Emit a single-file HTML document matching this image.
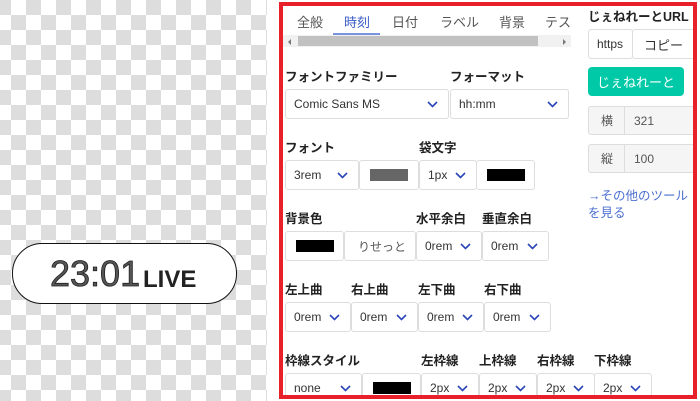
<!DOCTYPE html>
<html><head><meta charset="utf-8"><style>
*{box-sizing:border-box;margin:0;padding:0}
body{width:700px;height:401px;overflow:hidden;background:#fff;font-family:"Liberation Sans","Noto Sans CJK JP",sans-serif;position:relative;color:#222}
.chk{position:absolute;left:0;top:0;width:267px;height:401px;background-color:#fff;background-image:linear-gradient(45deg,#ddd 25%,transparent 25%,transparent 75%,#ddd 75%),linear-gradient(45deg,#ddd 25%,transparent 25%,transparent 75%,#ddd 75%);background-size:30px 30px;background-position:11px 0,26px 15px}
.pill{position:absolute;left:12px;top:243px;width:225px;height:61px;border:1.5px solid #111;border-radius:30px;background:#fff}
.t{position:absolute;left:50px;top:254px;font-size:36px;line-height:40px;color:#555;-webkit-text-stroke:0.8px #222;font-family:"Liberation Sans",sans-serif}
.l{position:absolute;left:143px;top:266px;font-size:24px;line-height:28px;font-weight:bold;color:#222;font-family:"Liberation Sans",sans-serif}
.frame{position:absolute;left:279px;top:2px;width:418px;height:397px;border:4px solid #e8202a;overflow:hidden}
.a{position:absolute;white-space:nowrap}
.tab{font-size:13px;color:#555;top:8px}
.lab{font-size:12.5px;font-weight:bold;color:#222}
.box{position:absolute;border:1px solid #ddd;border-radius:3px;background:#fff;font-size:12px;color:#333;padding-left:8px;display:flex;align-items:center}
.box svg{position:absolute;right:10px;top:50%;margin-top:-3px}
.sw{position:absolute;height:12px;top:50%;margin-top:-6px;background:#000}
</style></head><body>
<div class="chk"></div>
<div class="pill"></div>
<div class="t">23:01</div>
<div class="l">LIVE</div>
<div class="frame">
<div style="position:absolute;left:-283px;top:-6px;width:700px;height:401px">
<span class="a tab" style="left:297px;top:12px">全般</span>
<span class="a tab" style="left:344px;top:12px;color:#3a5bc7">時刻</span>
<div class="a" style="left:333px;top:33px;width:47px;height:1.5px;background:#7a93e0"></div>
<span class="a tab" style="left:392px;top:12px">日付</span>
<span class="a tab" style="left:440px;top:12px">ラベル</span>
<span class="a tab" style="left:499px;top:12px">背景</span>
<span class="a tab" style="left:545px;top:12px">テス</span>
<div class="a" style="left:283px;top:35px;width:288px;height:12px;background:#f1f1f1"></div>
<div class="a" style="left:298px;top:36px;width:240px;height:10px;background:#c1c1c1"></div>
<div class="a" style="left:288px;top:39px;width:0;height:0;border:3px solid transparent;border-right-color:#777;border-left:0"></div>
<div class="a" style="left:563px;top:39px;width:0;height:0;border:3px solid transparent;border-left-color:#777;border-right:0"></div>

<span class="a lab" style="left:285px;top:66px">フォントファミリー</span>
<span class="a lab" style="left:450px;top:66px">フォーマット</span>
<div class="box" style="left:285px;top:89px;width:164px;height:30px">Comic Sans MS<svg width="11" height="7"><path d="M1 1l4.5 4.5L10 1" stroke="#2a45b8" stroke-width="1.6" fill="none"/></svg></div>
<div class="box" style="left:450px;top:89px;width:119px;height:30px">hh:mm<svg width="11" height="7"><path d="M1 1l4.5 4.5L10 1" stroke="#2a45b8" stroke-width="1.6" fill="none"/></svg></div>

<span class="a lab" style="left:285px;top:137px">フォント</span>
<span class="a lab" style="left:419px;top:137px">袋文字</span>
<div class="box" style="left:285px;top:160px;width:74px;height:30px">3rem<svg width="11" height="7"><path d="M1 1l4.5 4.5L10 1" stroke="#2a45b8" stroke-width="1.6" fill="none"/></svg></div>
<div class="box" style="left:359px;top:160px;width:60px;height:30px"><div class="sw" style="left:10px;width:38px;background:#666"></div></div>
<div class="box" style="left:419px;top:160px;width:58px;height:30px">1px<svg width="11" height="7"><path d="M1 1l4.5 4.5L10 1" stroke="#2a45b8" stroke-width="1.6" fill="none"/></svg></div>
<div class="box" style="left:476px;top:160px;width:59px;height:30px"><div class="sw" style="left:10px;width:38px"></div></div>

<span class="a lab" style="left:285px;top:208px">背景色</span>
<span class="a lab" style="left:416px;top:208px">水平余白</span>
<span class="a lab" style="left:482px;top:208px">垂直余白</span>
<div class="box" style="left:285px;top:231px;width:59px;height:30px"><div class="sw" style="left:10px;width:38px"></div></div>
<div class="box" style="left:344px;top:231px;width:72px;height:30px;padding-left:13px;color:#555">りせっと</div>
<div class="box" style="left:416px;top:231px;width:66px;height:30px">0rem<svg width="11" height="7"><path d="M1 1l4.5 4.5L10 1" stroke="#2a45b8" stroke-width="1.6" fill="none"/></svg></div>
<div class="box" style="left:482px;top:231px;width:67px;height:30px">0rem<svg width="11" height="7"><path d="M1 1l4.5 4.5L10 1" stroke="#2a45b8" stroke-width="1.6" fill="none"/></svg></div>

<span class="a lab" style="left:285px;top:279px">左上曲</span>
<span class="a lab" style="left:351px;top:279px">右上曲</span>
<span class="a lab" style="left:418px;top:279px">左下曲</span>
<span class="a lab" style="left:484px;top:279px">右下曲</span>
<div class="box" style="left:285px;top:302px;width:66px;height:30px">0rem<svg width="11" height="7"><path d="M1 1l4.5 4.5L10 1" stroke="#2a45b8" stroke-width="1.6" fill="none"/></svg></div>
<div class="box" style="left:351px;top:302px;width:67px;height:30px">0rem<svg width="11" height="7"><path d="M1 1l4.5 4.5L10 1" stroke="#2a45b8" stroke-width="1.6" fill="none"/></svg></div>
<div class="box" style="left:418px;top:302px;width:66px;height:30px">0rem<svg width="11" height="7"><path d="M1 1l4.5 4.5L10 1" stroke="#2a45b8" stroke-width="1.6" fill="none"/></svg></div>
<div class="box" style="left:484px;top:302px;width:67px;height:30px">0rem<svg width="11" height="7"><path d="M1 1l4.5 4.5L10 1" stroke="#2a45b8" stroke-width="1.6" fill="none"/></svg></div>

<span class="a lab" style="left:285px;top:350px">枠線スタイル</span>
<span class="a lab" style="left:421px;top:350px">左枠線</span>
<span class="a lab" style="left:479px;top:350px">上枠線</span>
<span class="a lab" style="left:537px;top:350px">右枠線</span>
<span class="a lab" style="left:594px;top:350px">下枠線</span>
<div class="box" style="left:285px;top:373px;width:77px;height:30px">none<svg width="11" height="7"><path d="M1 1l4.5 4.5L10 1" stroke="#2a45b8" stroke-width="1.6" fill="none"/></svg></div>
<div class="box" style="left:362px;top:373px;width:59px;height:30px"><div class="sw" style="left:10px;width:38px"></div></div>
<div class="box" style="left:421px;top:373px;width:58px;height:30px">2px<svg width="11" height="7"><path d="M1 1l4.5 4.5L10 1" stroke="#2a45b8" stroke-width="1.6" fill="none"/></svg></div>
<div class="box" style="left:479px;top:373px;width:58px;height:30px">2px<svg width="11" height="7"><path d="M1 1l4.5 4.5L10 1" stroke="#2a45b8" stroke-width="1.6" fill="none"/></svg></div>
<div class="box" style="left:537px;top:373px;width:58px;height:30px">2px<svg width="11" height="7"><path d="M1 1l4.5 4.5L10 1" stroke="#2a45b8" stroke-width="1.6" fill="none"/></svg></div>
<div class="box" style="left:594px;top:373px;width:58px;height:30px">2px<svg width="11" height="7"><path d="M1 1l4.5 4.5L10 1" stroke="#2a45b8" stroke-width="1.6" fill="none"/></svg></div>

<span class="a lab" style="left:588px;top:6px">じぇねれーとURL</span>
<div class="box" style="left:588px;top:29px;width:45px;height:30px;padding-left:8px">https</div>
<div class="box" style="left:632px;top:29px;width:70px;height:30px;padding-left:11px;font-size:13px">コピー</div>
<div class="a" style="left:588px;top:67px;width:96px;height:29px;background:#00c9a7;border-radius:4px;color:#fff;font-size:13px;display:flex;align-items:center;justify-content:center">じぇねれーと</div>
<div class="box" style="left:588px;top:106px;width:110px;height:29px;background:#f5f5f5;padding-left:12px;color:#555">横<span style="position:absolute;left:45px">321</span></div>
<div class="a" style="left:624px;top:107px;width:1px;height:27px;background:#ddd"></div>
<div class="box" style="left:588px;top:144px;width:110px;height:29px;background:#f5f5f5;padding-left:12px;color:#555">縦<span style="position:absolute;left:45px">100</span></div>
<div class="a" style="left:624px;top:145px;width:1px;height:27px;background:#ddd"></div>
<span class="a" style="left:588px;top:185px;font-size:12.5px;color:#4a6fd0">→その他のツール</span>
<span class="a" style="left:588px;top:202px;font-size:12.5px;color:#4a6fd0">を見る</span>
</div>
</div>
</body></html>
